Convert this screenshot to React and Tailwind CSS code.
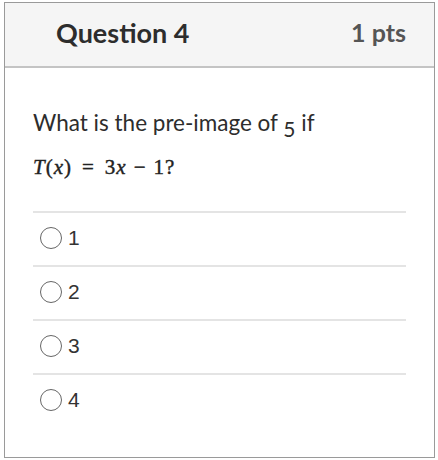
import React from "react";

function Radio({ label }) {
  return (
    <div className="flex items-center h-[54px] border-t-2 border-[#e4e4e4] pl-[7px] pb-[3px]">
      <span className="w-[22px] h-[22px] rounded-full border border-[#666] bg-white shrink-0"></span>
      <span className="ml-[6px] text-[21px] text-[#333] leading-none" style={{ fontFamily: "'Liberation Sans', Arial, sans-serif" }}>{label}</span>
    </div>
  );
}

export default function App() {
  return (
    <div className="w-[438px] h-[460px] bg-white pt-[2px] pl-[4px]" style={{ fontFamily: "Lato, sans-serif" }}>
      <div className="w-[431px] h-[456px] border border-[#9a9a9a] flex flex-col">
        <div className="h-[65px] bg-[#f5f5f5] border-b-2 border-[#c4c4c4] flex items-center justify-between pl-[51px] pr-[28px] pb-[3px]">
          <span className="text-[27px] font-bold text-[#2d2d2d]">Question 4</span>
          <span className="text-[25px] font-bold text-[#555]">1 pts</span>
        </div>
        <div className="px-[28px] pt-[42px]">
          <div className="text-[22.5px] text-[#2d2d2d] leading-[26px]">
            What is the pre-image of <span className="relative top-[6px] text-[21px]">5</span> if
          </div>
          <div className="mt-[18px] h-[26px] leading-[26px] text-[21px] text-[#222] tracking-[1px]" style={{ fontFamily: "'Liberation Serif', 'Times New Roman', serif", WebkitTextStroke: "0.4px #222" }}>
            <i>T</i>(<i>x</i>)<span className="mx-[10px]">=</span>3<i>x</i><span className="mx-[7px]">−</span>1?
          </div>
          <div className="mt-[31px]">
            <Radio label="1" />
            <Radio label="2" />
            <Radio label="3" />
            <Radio label="4" />
          </div>
        </div>
      </div>
    </div>
  );
}
